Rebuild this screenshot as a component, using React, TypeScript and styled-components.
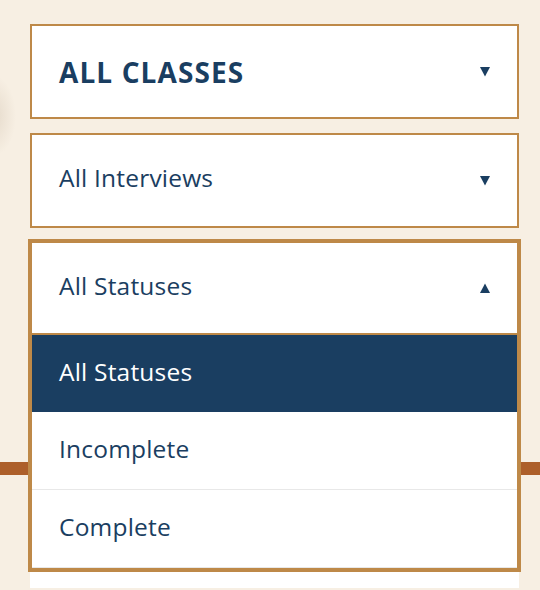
import React, { useState } from "react";
import styled, { createGlobalStyle } from "styled-components";

const GlobalStyle = createGlobalStyle`
  html, body {
    margin: 0;
    padding: 0;
    height: 100%;
  }
  body {
    background-color: #f7efe3;
    background-image:
      radial-gradient(ellipse 22px 40px at -6px 116px, rgba(150, 125, 95, 0.18), rgba(150, 125, 95, 0)),
      linear-gradient(to bottom, transparent 462px, #ad5f2a 462px, #ad5f2a 475px, transparent 475px);
    background-repeat: no-repeat;
    font-family: "Open Sans", "Noto Sans", sans-serif;
    overflow: hidden;
  }
`;

const tan = "#be8948";
const navy = "#1a3e61";

const Filters = styled.div`
  display: flex;
  flex-direction: column;
  width: 489px;
  padding: 24px 0 0 30px;
`;

const Select = styled.div<{ $gap: number }>`
  position: relative;
  margin-top: ${(p) => p.$gap}px;
`;

const Trigger = styled.button<{ $open?: boolean }>`
  display: flex;
  align-items: center;
  justify-content: space-between;
  box-sizing: border-box;
  width: ${(p) => (p.$open ? "493px" : "100%")};
  height: ${(p) => (p.$open ? "96px" : "95px")};
  margin: ${(p) => (p.$open ? "0 -2px" : "0")};
  padding: 0 27px;
  background: #fff;
  border: ${(p) => (p.$open ? 4 : 2)}px solid ${tan};
  border-bottom-width: 2px;
  cursor: pointer;
  font-family: inherit;
  text-align: left;
`;

const Label = styled.span<{ $heading?: boolean }>`
  color: ${navy};
  font-size: ${(p) => (p.$heading ? "28px" : "24.5px")};
  font-weight: ${(p) => (p.$heading ? 700 : 400)};
  letter-spacing: ${(p) => (p.$heading ? "1.1px" : "0.2px")};
  text-transform: ${(p) => (p.$heading ? "uppercase" : "none")};
  line-height: 1;
  padding-bottom: ${(p) => (p.$heading ? "0" : "4px")};
`;

const Caret = styled.svg`
  width: 10px;
  height: 10px;
  flex: none;
`;

const Menu = styled.ul`
  position: absolute;
  top: 96px;
  left: -2px;
  width: 493px;
  box-sizing: border-box;
  margin: 0;
  padding: 0;
  list-style: none;
  background: #fff;
  border: 4px solid ${tan};
  border-top: none;
  z-index: 2;
`;

const Option = styled.li<{ $selected?: boolean }>`
  display: flex;
  align-items: center;
  box-sizing: border-box;
  height: ${(p) => (p.$selected ? "77px" : "78px")};
  padding: 0 27px 4px;
  background: ${(p) => (p.$selected ? navy : "#fff")};
  color: ${(p) => (p.$selected ? "#fff" : navy)};
  border-bottom: ${(p) => (p.$selected ? "none" : "1px solid #e8e8e8")};
  font-size: 24.5px;
  letter-spacing: 0.2px;
  cursor: pointer;
`;

const Card = styled.div`
  margin-top: 14px;
  height: 239px;
  background: #fff;
`;

const Arrow: React.FC<{ up?: boolean }> = ({ up }) => (
  <Caret viewBox="0 0 10 10">
    {up ? (
      <polygon points="5,0.5 10,10 0,10" fill={navy} />
    ) : (
      <polygon points="0,0 10,0 5,9.5" fill={navy} />
    )}
  </Caret>
);

const statuses = ["All Statuses", "Incomplete", "Complete"];

const App: React.FC = () => {
  const [status, setStatus] = useState<string>("All Statuses");

  return (
    <>
      <GlobalStyle />
      <Filters>
        <Select $gap={0}>
          <Trigger>
            <Label $heading>All Classes</Label>
            <Arrow />
          </Trigger>
        </Select>
        <Select $gap={14}>
          <Trigger>
            <Label>All Interviews</Label>
            <Arrow />
          </Trigger>
        </Select>
        <Select $gap={11}>
          <Trigger $open>
            <Label>{status}</Label>
            <Arrow up />
          </Trigger>
          <Menu>
            {statuses.map((s) => (
              <Option key={s} $selected={s === status} onClick={() => setStatus(s)}>
                {s}
              </Option>
            ))}
          </Menu>
        </Select>
        <Card />
      </Filters>
    </>
  );
};

export default App;
